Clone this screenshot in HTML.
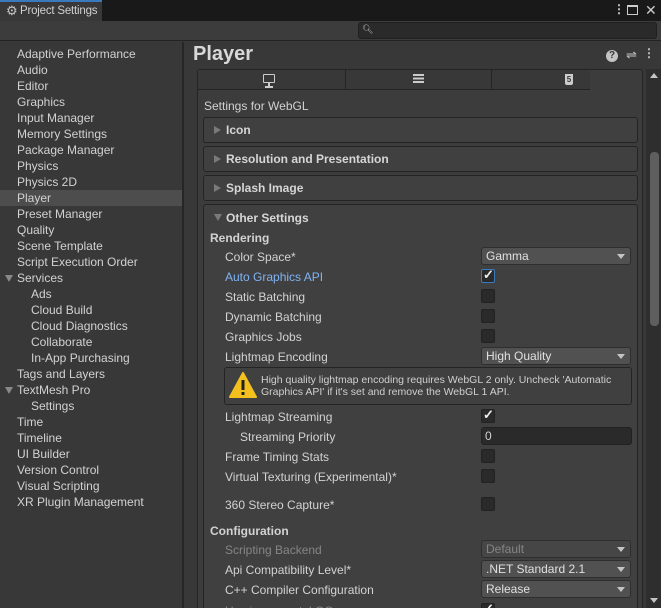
<!DOCTYPE html>
<html><head><meta charset="utf-8"><style>
*{box-sizing:border-box;margin:0;padding:0}
html,body{width:661px;height:608px;overflow:hidden}
body{background:#383838;font-family:"Liberation Sans",sans-serif;font-size:12px;color:#d2d2d2;position:relative}
.a{position:absolute;white-space:nowrap}
.side div{position:absolute;left:17px;height:16px;line-height:16px;white-space:nowrap}
.fold{position:absolute;left:203px;width:435px;height:26px;background:#404040;border:1px solid #242424;border-radius:3px}
.fold span{position:absolute;left:22px;top:5px;font-weight:bold;font-size:12px;color:#d6d6d6}
.fold i{position:absolute;left:10px;top:8px;width:0;height:0;border-left:7px solid #7a7a7a;border-top:4px solid transparent;border-bottom:4px solid transparent}
.lbl{position:absolute;left:225px;white-space:nowrap;line-height:16px}
.cb{position:absolute;left:481px;width:14px;height:14px;background:#2a2a2a;border:1px solid #222;border-radius:2px}
.dd{position:absolute;left:481px;width:150px;height:18px;background:#515151;border:1px solid #2e2e2e;border-radius:3px;padding-left:4px;line-height:16px;color:#e0e0e0}
.dd:after{content:"";position:absolute;right:5px;top:6px;border-top:5px solid #c4c4c4;border-left:4px solid transparent;border-right:4px solid transparent}
.chk:after{content:"✓";position:absolute;left:1px;top:-3px;font-size:13px;color:#eee;font-weight:bold}
</style></head><body>
<div class="a" style="left:0;top:0;width:661px;height:21px;background:#191919"></div>
<div class="a" style="left:0;top:0;width:102px;height:21px;background:#383838;border-top:2px solid #3a79bb"></div>
<div class="a" style="left:6px;top:3px;font-size:13px;color:#c8c8c8">⚙</div>
<div class="a" style="left:20px;top:5px;font-size:11.5px;color:#d0d0d0;letter-spacing:-0.2px">Project Settings</div>
<div class="a" style="left:613px;top:2px;color:#ccc;font-weight:bold">⋮</div>
<div class="a" style="left:627px;top:5px;width:11px;height:10px;border:1.5px solid #ccc;border-top-width:2.5px"></div>
<div class="a" style="left:645px;top:2px;color:#ccc;font-size:14px">✕</div>
<div class="a" style="left:0;top:21px;width:661px;height:20px;background:#3c3c3c;border-bottom:1px solid #232323"></div>
<div class="a" style="left:358px;top:22px;width:299px;height:17px;background:#2a2a2a;border:1px solid #202020;border-radius:3px"></div>
<div class="a" style="left:362px;top:24px;font-size:9px;color:#bbb">🔍︎</div>
<div class="a" style="left:0;top:42px;width:182px;height:566px;background:#383838"></div>
<div class="a" style="left:182px;top:42px;width:2px;height:566px;background:#262626"></div>
<div class="a" style="left:0;top:190px;width:182px;height:16px;background:#4d4d4d"></div>
<div class="side">
<div style="top:46px">Adaptive Performance</div><div style="top:62px">Audio</div><div style="top:78px">Editor</div><div style="top:94px">Graphics</div><div style="top:110px">Input Manager</div><div style="top:126px">Memory Settings</div><div style="top:142px">Package Manager</div><div style="top:158px">Physics</div><div style="top:174px">Physics 2D</div><div style="top:190px">Player</div><div style="top:206px">Preset Manager</div><div style="top:222px">Quality</div><div style="top:238px">Scene Template</div><div style="top:254px">Script Execution Order</div><div style="top:270px">Services</div><div style="top:286px;left:31px">Ads</div><div style="top:302px;left:31px">Cloud Build</div><div style="top:318px;left:31px">Cloud Diagnostics</div><div style="top:334px;left:31px">Collaborate</div><div style="top:350px;left:31px">In-App Purchasing</div><div style="top:366px">Tags and Layers</div><div style="top:382px">TextMesh Pro</div><div style="top:398px;left:31px">Settings</div><div style="top:414px">Time</div><div style="top:430px">Timeline</div><div style="top:446px">UI Builder</div><div style="top:462px">Version Control</div><div style="top:478px">Visual Scripting</div><div style="top:494px">XR Plugin Management</div>
</div>
<div class="a" style="left:5px;top:275px;border-top:7px solid #888;border-left:4px solid transparent;border-right:4px solid transparent"></div>
<div class="a" style="left:5px;top:387px;border-top:7px solid #888;border-left:4px solid transparent;border-right:4px solid transparent"></div>
<div class="a" style="left:193px;top:43px;font-size:20px;font-weight:bold;color:#d8d8d8">Player</div>
<div class="a" style="left:606px;top:50px;width:12px;height:12px;border-radius:50%;background:#c4c4c4;color:#383838;font-size:10px;font-weight:bold;text-align:center;line-height:12px">?</div>
<div class="a" style="left:626px;top:47px;color:#c4c4c4;font-size:13px">⇌</div>
<div class="a" style="left:643px;top:46px;color:#c4c4c4;font-weight:bold">⋮</div>
<div class="a" style="left:197px;top:69px;width:446px;height:545px;background:#3c3c3c;border:1px solid #242424;border-radius:3px"></div>
<div class="a" style="left:198px;top:70px;width:392px;height:20px;background:#383838;border-bottom:1px solid #242424"></div>
<div class="a" style="left:345px;top:70px;width:1px;height:20px;background:#242424"></div>
<div class="a" style="left:491px;top:70px;width:1px;height:20px;background:#242424"></div>
<div class="a" style="left:263px;top:74px;width:12px;height:9px;border:1.5px solid #ccc;border-radius:1px"></div>
<div class="a" style="left:268px;top:83px;width:2px;height:3px;background:#ccc"></div><div class="a" style="left:265px;top:86px;width:8px;height:1.5px;background:#ccc"></div>
<div class="a" style="left:413px;top:74px;width:11px;height:10px;background:repeating-linear-gradient(#ccc 0 2px,#383838 2px 3.5px)"></div>
<div class="a" style="left:565px;top:74px;width:8px;height:11px;background:#ccc;border-radius:0 0 2px 2px;color:#383838;font-size:8px;font-weight:bold;text-align:center;line-height:12px">5</div>
<div class="a" style="left:646px;top:69px;width:15px;height:539px;background:#2e2e2e"></div>
<div class="a" style="left:650px;top:152px;width:9px;height:174px;background:#5e5e5e;border-radius:4px"></div>
<div class="a" style="left:650px;top:73px;border-bottom:5px solid #c4c4c4;border-left:4px solid transparent;border-right:4px solid transparent"></div>
<div class="a" style="left:650px;top:598px;border-top:5px solid #c4c4c4;border-left:4px solid transparent;border-right:4px solid transparent"></div>

<div class="a" style="left:204px;top:99px">Settings for WebGL</div>
<div class="fold" style="top:117px"><i></i><span>Icon</span></div>
<div class="fold" style="top:146px"><i></i><span>Resolution and Presentation</span></div>
<div class="fold" style="top:175px"><i></i><span>Splash Image</span></div>
<div class="fold" style="top:204px;height:420px"><i style="border-left:4px solid transparent;border-right:4px solid transparent;border-top:7px solid #7a7a7a;border-bottom:0;left:10px;top:9px"></i><span style="top:6px">Other Settings</span></div>
<div class="a" style="left:210px;top:231px;font-weight:bold">Rendering</div>

<div class="lbl" style="top:249px">Color Space*</div><div class="dd" style="top:247px">Gamma</div>
<div class="lbl" style="top:269px;color:#7fb3f5">Auto Graphics API</div><div class="cb chk" style="top:269px;border-color:#3a79bb"></div>
<div class="lbl" style="top:289px">Static Batching</div><div class="cb" style="top:289px"></div>
<div class="lbl" style="top:309px">Dynamic Batching</div><div class="cb" style="top:309px"></div>
<div class="lbl" style="top:329px">Graphics Jobs</div><div class="cb" style="top:329px"></div>
<div class="lbl" style="top:349px">Lightmap Encoding</div><div class="dd" style="top:347px">High Quality</div>
<div class="a" style="left:224px;top:367px;width:408px;height:38px;background:#404040;border:1px solid #242424;border-radius:3px"></div>
<svg class="a" style="left:229px;top:371px" width="28" height="28" viewBox="0 0 28 28"><path d="M14 2 L27 26 L1 26 Z" fill="#f4c01e" stroke="#f4c01e" stroke-linejoin="round" stroke-width="2"/><rect x="12.5" y="9" width="3" height="10" fill="#222"/><rect x="12.5" y="21" width="3" height="3" fill="#222"/></svg>
<div class="a" style="left:261px;top:374px;font-size:10.5px;line-height:12px;color:#cfcfcf">High quality lightmap encoding requires WebGL 2 only. Uncheck 'Automatic<br>Graphics API' if it's set and remove the WebGL 1 API.</div>
<div class="lbl" style="top:409px">Lightmap Streaming</div><div class="cb chk" style="top:409px"></div>
<div class="lbl" style="top:429px;left:240px">Streaming Priority</div><div class="a" style="left:481px;top:427px;width:151px;height:18px;background:#2a2a2a;border:1px solid #212121;border-radius:3px;padding-left:3px;line-height:16px">0</div>
<div class="lbl" style="top:449px">Frame Timing Stats</div><div class="cb" style="top:449px"></div>
<div class="lbl" style="top:469px">Virtual Texturing (Experimental)*</div><div class="cb" style="top:469px"></div>
<div class="lbl" style="top:497px">360 Stereo Capture*</div><div class="cb" style="top:497px"></div>
<div class="a" style="left:210px;top:524px;font-weight:bold">Configuration</div>
<div class="lbl" style="top:542px;color:#858585">Scripting Backend</div><div class="dd" style="top:540px;background:#464646;color:#858585">Default</div>
<div class="lbl" style="top:562px">Api Compatibility Level*</div><div class="dd" style="top:560px">.NET Standard 2.1</div>
<div class="lbl" style="top:582px">C++ Compiler Configuration</div><div class="dd" style="top:580px">Release</div>
<div class="lbl" style="top:603px;color:#858585">Use incremental GC</div><div class="cb chk" style="top:603px"></div>
</body></html>
